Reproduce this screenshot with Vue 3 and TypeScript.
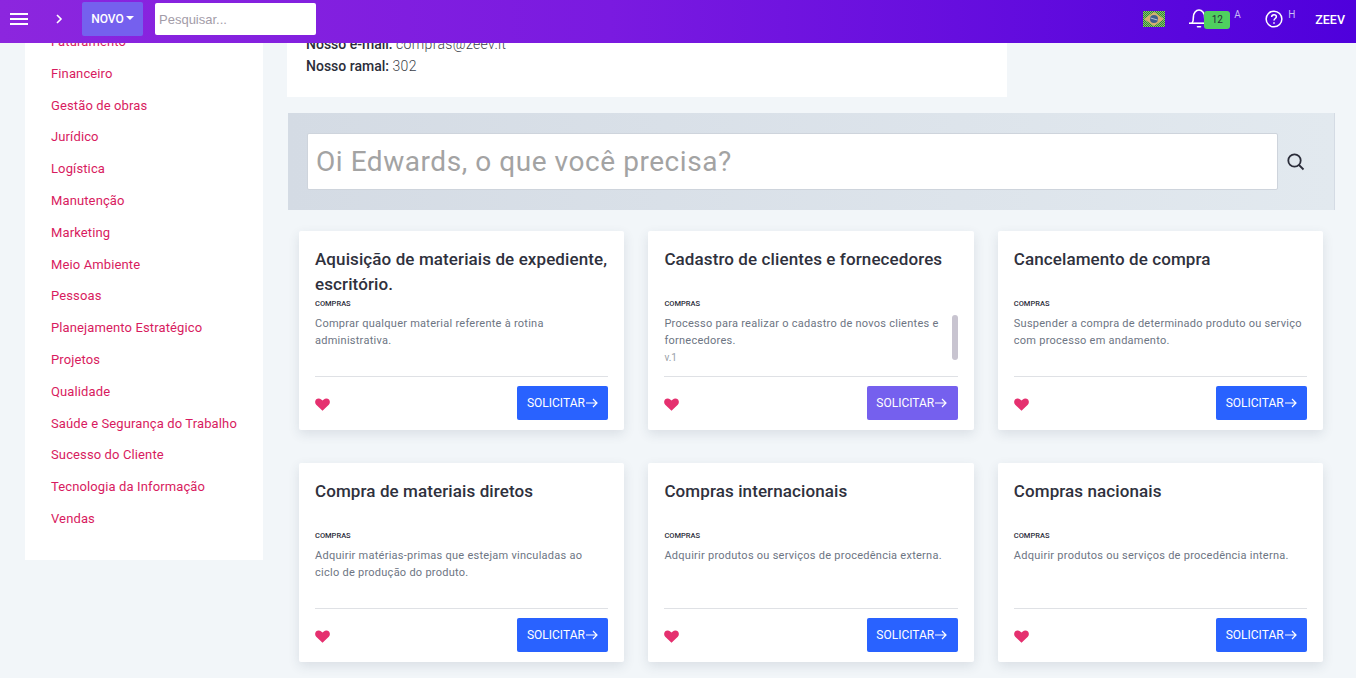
<script setup lang="ts">
interface Service { title: string; desc: string; version?: string; active?: boolean }

const areas = ['Faturamento', 'Financeiro', 'Gestão de obras', 'Jurídico', 'Logística', 'Manutenção', 'Marketing', 'Meio Ambiente', 'Pessoas', 'Planejamento Estratégico', 'Projetos', 'Qualidade', 'Saúde e Segurança do Trabalho', 'Sucesso do Cliente', 'Tecnologia da Informação', 'Vendas']

const services: Service[] = [
  { title: 'Aquisição de materiais de expediente, escritório.', desc: 'Comprar qualquer material referente à rotina administrativa.' },
  { title: 'Cadastro de clientes e fornecedores', desc: 'Processo para realizar o cadastro de novos clientes e fornecedores.', version: 'v.1', active: true },
  { title: 'Cancelamento de compra', desc: 'Suspender a compra de determinado produto ou serviço com processo em andamento.' },
  { title: 'Compra de materiais diretos', desc: 'Adquirir matérias-primas que estejam vinculadas ao ciclo de produção do produto.' },
  { title: 'Compras internacionais', desc: 'Adquirir produtos ou serviços de procedência externa.' },
  { title: 'Compras nacionais', desc: 'Adquirir produtos ou serviços de procedência interna.' },
]
</script>

<template>
  <div class="page">
    <header class="topbar">
      <button class="icon-btn burger"><span></span><span></span><span></span></button>
      <svg class="chev" width="8" height="12" viewBox="0 0 8 12"><path d="M2 2l4 4-4 4" fill="none" stroke="#fff" stroke-width="1.6" /></svg>
      <button class="novo">NOVO<i class="caret"></i></button>
      <input class="quick" placeholder="Pesquisar..." />
      <div class="right">
        <svg class="flag" width="22" height="16" viewBox="0 0 22 16">
          <defs>
            <pattern id="dither" width="2" height="2" patternUnits="userSpaceOnUse">
              <rect width="2" height="2" fill="#8ccb63" />
              <rect width="1" height="1" fill="#2f7d3c" />
              <rect x="1" y="1" width="1" height="1" fill="#2f7d3c" />
            </pattern>
          </defs>
          <rect width="22" height="16" fill="url(#dither)" />
          <path d="M11 1L21 8 11 15 1 8z" fill="#d7b070" />
          <circle cx="11" cy="8" r="4" fill="#3f5f8f" />
          <path d="M7.500 7l7 2" stroke="#b9c4cf" stroke-width="1" />
        </svg>
        <div class="bell">
          <svg width="20" height="20" viewBox="0 0 20 20" fill="none" stroke="#fff" stroke-width="1.600">
            <path d="M0 14.200h20" />
            <path d="M3 14.200c1-1.200 1.400-2.800 1.400-6.200C4.400 3.800 7 1 10 1s5.600 2.800 5.600 7c0 3.400.4 5 1.400 6.200" />
            <path d="M8.500 17.800h3" stroke-linecap="round" />
          </svg>
          <span class="count">12</span>
          <sup class="key">A</sup>
        </div>
        <div class="help">
          <svg width="18" height="18" viewBox="0 0 19 19" fill="none" stroke="#fff" stroke-width="1.600">
            <circle cx="9.500" cy="9.500" r="8.300" />
            <path d="M7 7.300c0-1.500 1.100-2.400 2.500-2.400s2.500.9 2.500 2.200c0 1.900-2.500 1.900-2.500 3.900" />
            <path d="M9.500 12.800v1.700" />
          </svg>
          <sup class="key">H</sup>
        </div>
        <span class="user">ZEEV</span>
      </div>
    </header>

    <main class="content">
      <aside class="sidebar">
        <a v-for="a in areas" :key="a" class="area">{{ a }}</a>
      </aside>

      <section class="col">
        <div class="info">
          <p><b>Nosso e-mail:</b> <span>compras@zeev.it</span></p>
          <p><b>Nosso ramal:</b> <span>302</span></p>
        </div>

        <div class="search-band">
          <input class="big-search" placeholder="Oi Edwards, o que você precisa?" />
          <svg class="lens" width="20" height="20" viewBox="0 0 20 20" fill="none" stroke="#2b2d3a" stroke-width="1.800">
            <circle cx="8.500" cy="8.500" r="6.200" />
            <path d="M13 13l4.500 4.500" />
          </svg>
        </div>

        <div class="grid">
          <article v-for="s in services" :key="s.title" class="card">
            <div class="body">
              <h3>{{ s.title }}</h3>
              <small class="tag">COMPRAS</small>
              <p class="desc">{{ s.desc }}</p>
              <span v-if="s.version" class="ver">v.1</span>
              <i v-if="s.active" class="scroll"></i>
            </div>
            <footer class="foot">
              <svg class="heart" width="15" height="13" viewBox="0 0 15 13"><path d="M7.500 12.800L1.200 6.800C-.2 5.300-.2 3 1 1.600 2.400.1 4.700.1 6.200 1.400l1.300 1.200 1.300-1.200c1.500-1.300 3.800-1.300 5.200.2 1.200 1.400 1.200 3.700-.2 5.200z" fill="#e5306f" /></svg>
              <button class="go" :class="{ on: s.active }">SOLICITAR<svg width="12" height="10" viewBox="0 0 12 10" fill="none" stroke="#fff" stroke-width="1.200"><path d="M0 5h11M7 1l4 4-4 4" /></svg></button>
            </footer>
          </article>
        </div>
      </section>
    </main>
  </div>
</template>

<style>
html, body { margin: 0; height: 100%; overflow: hidden; }
</style>

<style scoped>
.page {
  width: 1356px; height: 678px; overflow: hidden; background: #f2f6f9;
  font-family: Roboto, "Liberation Sans", sans-serif; color: #2b2d3a;
}
.topbar {
  position: relative; z-index: 2; height: 43px; box-sizing: border-box; padding-bottom: 5px; display: flex; align-items: center;
  background: linear-gradient(90deg, #8c26de 0%, #7a1ae0 45%, #4f00dc 100%);
}
.icon-btn { border: 0; background: none; padding: 0; }
.burger { width: 18px; margin-left: 10px; display: flex; flex-direction: column; gap: 3px; }
.burger span { height: 2px; background: #fff; display: block; }
.chev { margin-left: 27px; }
.novo {
  margin-left: 19px; width: 61px; height: 34px; border: 0; border-radius: 2px; background: #7560ee;
  color: #fff; font: 500 12px Roboto, sans-serif; display: flex; align-items: center; justify-content: center; gap: 2px;
}
.caret { border: 4px solid transparent; border-top-color: #fff; border-bottom: 0; margin-top: -2px; }
.quick {
  margin-left: 12px; width: 161px; height: 32px; box-sizing: border-box; border: 0; border-radius: 2px;
  padding: 0 4px; font: 13px "Liberation Sans", sans-serif; outline: none;
}
.quick::placeholder { color: #a39ca8; }
.right { margin-left: auto; display: flex; align-items: center; padding-right: 11px; }
.flag { margin-right: 24px; }
.bell { position: relative; display: flex; height: 18px; align-items: center; width: 52px; margin-right: 24px; }
.count {
  position: absolute; left: 15px; top: 1px; width: 26px; height: 18px; border-radius: 3px; background: #4fd05f;
  color: #2b2d3a; font-size: 10px; line-height: 18px; text-align: center;
}
.key { position: absolute; top: -1px; font-size: 10px; color: #c6bdf5; line-height: 12px; }
.bell .key { left: 45px; }
.help { position: relative; display: flex; height: 18px; align-items: center; width: 18px; margin-right: 32px; }
.help .key { left: 23px; }
.user { color: #fff; font-size: 12.500px; font-weight: 500; }

.content { display: flex; align-items: flex-start; gap: 24px; padding-left: 25px; }
.sidebar {
  width: 238px; height: 560px; margin-top: -43px; padding-top: 26px; box-sizing: border-box;
  background: #fff; display: flex; flex-direction: column;
}
.area {
  margin-left: 26px; height: 31.800px; line-height: 31.800px; font-size: 13px; letter-spacing: .12px;
  color: #d81b60; white-space: nowrap;
}
.col { width: 1048px; margin-top: -43px; }
.info { width: 720px; height: 97px; box-sizing: border-box; background: #fff; padding: 33px 19px 0; }
.info p { margin: 0; font-size: 14px; line-height: 22px; }
.info span { font-weight: 300; letter-spacing: .35px; color: #3c3f4a; }
.info b { font-weight: 500; color: #2b2d3a; }
.search-band {
  margin: 16px 0 0 1px; height: 97px; box-sizing: border-box; padding: 20px 0 20px 19px; display: flex; align-items: center;
  background: linear-gradient(90deg, #d4dbe4, #e2e9ef); border-right: 1px solid #d4dbe4;
}
.big-search {
  width: 971px; height: 57px; box-sizing: border-box; border: 1px solid #ced4dc; border-radius: 2px; background: #fff;
  padding: 0 8px; font: 400 28px Roboto, sans-serif; letter-spacing: .55px; outline: none;
}
.big-search::placeholder { color: #a3a3a3; }
.lens { margin-left: 8px; }
.grid { display: grid; grid-template-columns: repeat(3, 325.400px); column-gap: 24px; row-gap: 33px; margin: 21px 0 0 12px; }
.card {
  height: 199px; box-sizing: border-box; background: #fff; border-radius: 2px; padding: 16px 16px 10px;
  box-shadow: 0 4px 12px rgba(40, 60, 80, .12); display: flex; flex-direction: column;
}
.body { position: relative; height: 129px; border-bottom: 1px solid #dfe1e5; }
.card h3 { margin: 0; height: 50px; font-size: 17px; font-weight: 500; line-height: 25px; letter-spacing: .1px; color: #2f313d; }
.tag { display: block; margin-top: 1px; font-size: 7.500px; font-weight: 500; line-height: 12px; color: #2b2d3a; }
.desc { margin: 5px 0 0; font-size: 11px; line-height: 17px; color: #6d7583; letter-spacing: .26px; }
.ver { display: block; font-size: 10px; line-height: 17px; color: #9a9fa8; }
.scroll { position: absolute; right: 0; top: 68px; width: 6px; height: 45px; border-radius: 3px; background: #c8c4d0; }
.foot { flex: 1; display: flex; align-items: flex-start; justify-content: space-between; padding-top: 9px; }
.heart { margin-top: 12px; }
.go {
  width: 91px; height: 34px; border: 0; border-radius: 2px; background: #2962ff; color: #fff; padding: 0 1px 0 0;
  font: 400 12px Roboto, sans-serif; display: flex; align-items: center; justify-content: center; gap: 1px;
}
.go.on { background: #7560ee; }
</style>
